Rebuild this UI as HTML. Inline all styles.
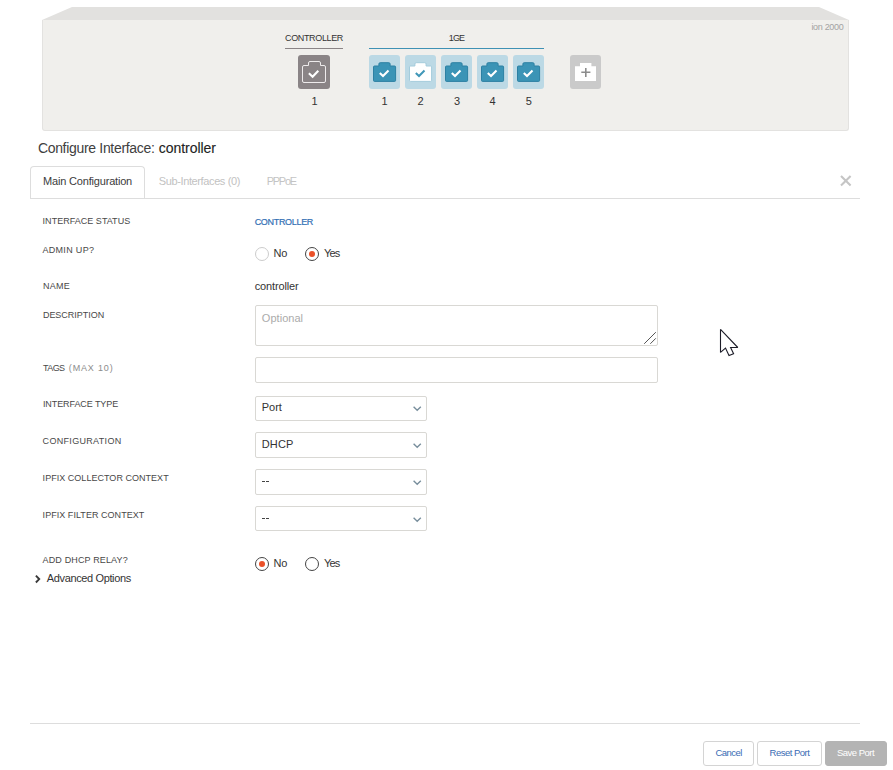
<!DOCTYPE html>
<html>
<head>
<meta charset="utf-8">
<title>Configure Interface: controller</title>
<style>
*{box-sizing:border-box;margin:0;padding:0}
html,body{width:893px;height:770px;background:#fff;overflow:hidden}
body{font-family:"Liberation Sans",sans-serif;color:#333;position:relative}
.abs{position:absolute}
.t{position:absolute;white-space:nowrap;line-height:1}
#body{left:42px;top:20px;width:807px;height:111px;background:#f0efec;border:1px solid #e3e2e0;border-top:none;border-radius:0 0 3px 3px}
.port{position:absolute;top:55px;width:31px;height:34px;border-radius:3px}
.p-blue{background:#bcd9e5}
.box{position:absolute;border:1px solid #d9d8d4;border-radius:2px;background:#fff}
.btn{position:absolute;top:741px;height:25px;border:1px solid #d4d4d4;border-radius:3px;background:#fff}
.radio{position:absolute;width:14px;height:14px;border-radius:50%;border:1px solid #444;background:#fff}
.radio.off{border-color:#ccc}
.radio i{position:absolute;left:3px;top:3px;width:6px;height:6px;border-radius:50%;background:#ea5028}
svg{position:absolute;overflow:visible}
</style>
</head>
<body>

<svg style="left:42px;top:7px" width="807" height="13" viewBox="0 0 807 13"><polygon points="30,0 777,0 807,13 0,13" fill="#e2e1df"/></svg>
<div class="abs" id="body"></div>
<div class="t" style="left:811.40px;top:23px;font-size:9px;letter-spacing:-0.313px;color:#a3a3a3;">ion 2000</div>
<div class="t" style="left:285.00px;top:34px;font-size:9px;letter-spacing:-0.350px;color:#333;">CONTROLLER</div>
<div class="abs" style="left:285px;top:48px;width:58px;height:1px;background:#8a8486"></div>
<div class="t" style="left:448.70px;top:34px;font-size:9px;letter-spacing:-0.800px;color:#333;">1GE</div>
<div class="abs" style="left:369px;top:48px;width:175px;height:1px;background:#3f91b4"></div>
<div class="port" style="left:298px;width:32px;background:#8a8486"></div>
<svg style="left:298px;top:55px" width="32" height="34" viewBox="0 0 32 34"><path d="M6 10.5 H10.5 V8 Q10.5 6.5 12 6.5 H21 Q22.5 6.5 22.5 8 V10.5 H26 Q27.5 10.5 27.5 12 V26 Q27.5 27.5 26 27.5 H6 Q4.5 27.5 4.5 26 V12 Q4.5 10.5 6 10.5 Z" fill="none" stroke="#eeebec" stroke-width="1"/><path d="M10.9 18.3 L14.6 21.8 L20.3 15.7" fill="none" stroke="#fff" stroke-width="2.1" stroke-linecap="butt" stroke-linejoin="miter"/></svg>
<div class="port p-blue" style="left:369px"></div>
<svg style="left:369px;top:55px" width="31" height="34" viewBox="0 0 31 34"><path d="M5.5 11 H9.9 V9 Q9.9 7.7 11.2 7.7 H19.8 Q21.1 7.7 21.1 9 V11 H25.6 Q26.6 11 26.6 12 V25.4 Q26.6 26.4 25.6 26.4 H5.5 Q4.5 26.4 4.5 25.4 V12 Q4.5 11 5.5 11 Z" fill="#3b94b6" stroke="#2d80a3" stroke-width="1"/><path d="M10.8 18.0 L14 21.0 L19.5 15.5" fill="none" stroke="#fff" stroke-width="2.1" stroke-linecap="butt" stroke-linejoin="miter"/></svg>
<div class="port p-blue" style="left:405px"></div>
<svg style="left:405px;top:55px" width="31" height="34" viewBox="0 0 31 34"><path d="M5.5 11 H9.9 V9 Q9.9 7.7 11.2 7.7 H19.8 Q21.1 7.7 21.1 9 V11 H25.6 Q26.6 11 26.6 12 V25.4 Q26.6 26.4 25.6 26.4 H5.5 Q4.5 26.4 4.5 25.4 V12 Q4.5 11 5.5 11 Z" fill="#fff" stroke="#a4ccdc" stroke-width="1"/><path d="M10.8 18.0 L14 21.0 L19.5 15.5" fill="none" stroke="#4097b8" stroke-width="2" stroke-linecap="butt" stroke-linejoin="miter"/></svg>
<div class="port p-blue" style="left:441px"></div>
<svg style="left:441px;top:55px" width="31" height="34" viewBox="0 0 31 34"><path d="M5.5 11 H9.9 V9 Q9.9 7.7 11.2 7.7 H19.8 Q21.1 7.7 21.1 9 V11 H25.6 Q26.6 11 26.6 12 V25.4 Q26.6 26.4 25.6 26.4 H5.5 Q4.5 26.4 4.5 25.4 V12 Q4.5 11 5.5 11 Z" fill="#3b94b6" stroke="#2d80a3" stroke-width="1"/><path d="M10.8 18.0 L14 21.0 L19.5 15.5" fill="none" stroke="#fff" stroke-width="2.1" stroke-linecap="butt" stroke-linejoin="miter"/></svg>
<div class="port p-blue" style="left:477px"></div>
<svg style="left:477px;top:55px" width="31" height="34" viewBox="0 0 31 34"><path d="M5.5 11 H9.9 V9 Q9.9 7.7 11.2 7.7 H19.8 Q21.1 7.7 21.1 9 V11 H25.6 Q26.6 11 26.6 12 V25.4 Q26.6 26.4 25.6 26.4 H5.5 Q4.5 26.4 4.5 25.4 V12 Q4.5 11 5.5 11 Z" fill="#3b94b6" stroke="#2d80a3" stroke-width="1"/><path d="M10.8 18.0 L14 21.0 L19.5 15.5" fill="none" stroke="#fff" stroke-width="2.1" stroke-linecap="butt" stroke-linejoin="miter"/></svg>
<div class="port p-blue" style="left:513px"></div>
<svg style="left:513px;top:55px" width="31" height="34" viewBox="0 0 31 34"><path d="M5.5 11 H9.9 V9 Q9.9 7.7 11.2 7.7 H19.8 Q21.1 7.7 21.1 9 V11 H25.6 Q26.6 11 26.6 12 V25.4 Q26.6 26.4 25.6 26.4 H5.5 Q4.5 26.4 4.5 25.4 V12 Q4.5 11 5.5 11 Z" fill="#3b94b6" stroke="#2d80a3" stroke-width="1"/><path d="M10.8 18.0 L14 21.0 L19.5 15.5" fill="none" stroke="#fff" stroke-width="2.1" stroke-linecap="butt" stroke-linejoin="miter"/></svg>
<div class="port" style="left:570px;background:#cacaca"></div>
<svg style="left:570px;top:55px" width="31" height="34" viewBox="0 0 31 34"><path d="M5 11.3 H10 V8 H21.4 V11.3 H26 V26 H5 Z" fill="#fff"/><path d="M11.3 17.3 H20.4 M15.8 13 V22" stroke="#8c8c8c" stroke-width="1.6" fill="none"/></svg>
<div class="t" style="left:311.41px;top:96px;font-size:11px;letter-spacing:0.000px;color:#333;">1</div>
<div class="t" style="left:381.61px;top:96px;font-size:11px;letter-spacing:0.000px;color:#333;">1</div>
<div class="t" style="left:417.41px;top:96px;font-size:11px;letter-spacing:0.000px;color:#333;">2</div>
<div class="t" style="left:454.01px;top:96px;font-size:11px;letter-spacing:0.000px;color:#333;">3</div>
<div class="t" style="left:489.61px;top:96px;font-size:11px;letter-spacing:0.000px;color:#333;">4</div>
<div class="t" style="left:525.71px;top:96px;font-size:11px;letter-spacing:0.000px;color:#333;">5</div>
<div class="t" style="left:37.90px;top:141px;font-size:14px;letter-spacing:-0.318px;color:#404040;">Configure Interface:</div>
<div class="t" style="left:158.80px;top:141px;font-size:14px;letter-spacing:-0.048px;color:#222;-webkit-text-stroke:0.12px #222;">controller</div>
<div class="abs" style="left:30px;top:166px;width:115px;height:33px;border:1px solid #ddd;border-bottom:none;border-radius:4px 4px 0 0;background:#fff"></div>
<div class="abs" style="left:30px;top:198px;width:830px;height:1px;background:#ddd"></div>
<div class="t" style="left:43.10px;top:176px;font-size:11px;letter-spacing:-0.188px;color:#3c3c3c;">Main Configuration</div>
<div class="t" style="left:158.80px;top:176px;font-size:11px;letter-spacing:-0.382px;color:#c2c2c2;">Sub-Interfaces (0)</div>
<div class="t" style="left:266.80px;top:176px;font-size:11px;letter-spacing:-1.302px;color:#c4c4c4;">PPPoE</div>
<svg style="left:840px;top:175px" width="12" height="12" viewBox="0 0 12 12"><path d="M1 1 L10.6 10.6 M10.6 1 L1 10.6" stroke="#c5c5c5" stroke-width="2.1" fill="none"/></svg>
<div class="t" style="left:42.60px;top:217px;font-size:9px;letter-spacing:0.027px;color:#484848;">INTERFACE STATUS</div>
<div class="t" style="left:42.40px;top:246px;font-size:9px;letter-spacing:0.328px;color:#484848;">ADMIN UP?</div>
<div class="t" style="left:42.90px;top:282px;font-size:9px;letter-spacing:0.328px;color:#484848;">NAME</div>
<div class="t" style="left:42.90px;top:311px;font-size:9px;letter-spacing:-0.015px;color:#484848;">DESCRIPTION</div>
<div class="t" style="left:42.90px;top:400px;font-size:9px;letter-spacing:-0.081px;color:#484848;">INTERFACE TYPE</div>
<div class="t" style="left:42.60px;top:437px;font-size:9px;letter-spacing:0.316px;color:#484848;">CONFIGURATION</div>
<div class="t" style="left:42.60px;top:474px;font-size:9px;letter-spacing:0.032px;color:#484848;">IPFIX COLLECTOR CONTEXT</div>
<div class="t" style="left:42.60px;top:511px;font-size:9px;letter-spacing:0.046px;color:#484848;">IPFIX FILTER CONTEXT</div>
<div class="t" style="left:42.60px;top:556px;font-size:9px;letter-spacing:0.139px;color:#484848;">ADD DHCP RELAY?</div>
<div class="t" style="left:42.90px;top:364px;font-size:9px;letter-spacing:-0.535px;color:#484848;">TAGS</div>
<div class="t" style="left:68.80px;top:364px;font-size:9px;letter-spacing:0.833px;color:#8c8c8c;">(MAX 10)</div>
<div class="t" style="left:254.70px;top:218px;font-size:9px;letter-spacing:-0.317px;color:#3370b5;-webkit-text-stroke:0.2px #3370b5;">CONTROLLER</div>
<div class="radio off" style="left:255px;top:247px"></div>
<div class="radio" style="left:305px;top:247px"><i></i></div>
<div class="t" style="left:273.60px;top:248px;font-size:11px;letter-spacing:-0.394px;color:#333;">No</div>
<div class="t" style="left:324.00px;top:248px;font-size:11px;letter-spacing:-0.887px;color:#333;">Yes</div>
<div class="t" style="left:254.70px;top:281px;font-size:11px;letter-spacing:-0.134px;color:#333;">controller</div>
<div class="box" style="left:255px;top:305px;width:403px;height:41px"></div>
<div class="t" style="left:261.80px;top:313px;font-size:11px;letter-spacing:0.042px;color:#ababab;">Optional</div>
<svg style="left:643px;top:331px" width="14" height="14" viewBox="0 0 14 14"><path d="M1.2 12.8 L12.8 1.2 M7.3 12.8 L12.8 7.3" stroke="#555" stroke-width="1" fill="none"/></svg>
<div class="box" style="left:255px;top:357px;width:403px;height:26px"></div>
<div class="box" style="left:255px;top:396px;width:172px;height:25px"></div>
<svg style="left:413px;top:406.4px" width="9" height="6" viewBox="0 0 9 6"><path d="M0.6 0.8 L4.2 4.2 L7.8 0.8" stroke="#788e9c" stroke-width="1.4" fill="none"/></svg>
<div class="t" style="left:261.80px;top:402px;font-size:11px;letter-spacing:-0.027px;color:#333;">Port</div>
<div class="box" style="left:255px;top:432px;width:172px;height:26px"></div>
<svg style="left:413px;top:443.0px" width="9" height="6" viewBox="0 0 9 6"><path d="M0.6 0.8 L4.2 4.2 L7.8 0.8" stroke="#788e9c" stroke-width="1.4" fill="none"/></svg>
<div class="t" style="left:261.80px;top:439px;font-size:11px;letter-spacing:0.097px;color:#333;">DHCP</div>
<div class="box" style="left:255px;top:469px;width:172px;height:26px"></div>
<svg style="left:413px;top:480.4px" width="9" height="6" viewBox="0 0 9 6"><path d="M0.6 0.8 L4.2 4.2 L7.8 0.8" stroke="#788e9c" stroke-width="1.4" fill="none"/></svg>
<div class="box" style="left:255px;top:506px;width:172px;height:25px"></div>
<svg style="left:413px;top:517.0px" width="9" height="6" viewBox="0 0 9 6"><path d="M0.6 0.8 L4.2 4.2 L7.8 0.8" stroke="#788e9c" stroke-width="1.4" fill="none"/></svg>
<div class="abs" style="left:262px;top:481px;width:3px;height:1px;background:#444"></div><div class="abs" style="left:266px;top:481px;width:3px;height:1px;background:#444"></div>
<div class="abs" style="left:262px;top:518px;width:3px;height:1px;background:#444"></div><div class="abs" style="left:266px;top:518px;width:3px;height:1px;background:#444"></div>
<div class="radio" style="left:255px;top:557px"><i></i></div>
<div class="radio" style="left:305px;top:557px"></div>
<div class="t" style="left:273.60px;top:558px;font-size:11px;letter-spacing:-0.394px;color:#333;">No</div>
<div class="t" style="left:324.00px;top:558px;font-size:11px;letter-spacing:-0.887px;color:#333;">Yes</div>
<svg style="left:35px;top:575px" width="6" height="8" viewBox="0 0 6 8"><path d="M0.9 0.7 L4.2 4.1 L0.9 7.5" stroke="#3a3a3a" stroke-width="1.9" fill="none"/></svg>
<div class="t" style="left:46.80px;top:573px;font-size:11px;letter-spacing:-0.366px;color:#333;">Advanced Options</div>
<svg style="left:715px;top:325px" width="30" height="36" viewBox="715 325 30 36"><path d="M720.5 329.4 L720.5 352.4 L725.5 348.1 L729 355.6 L733.6 353.7 L730.6 347.5 L737.8 347.5 Z" fill="#fff" stroke="#1c1c28" stroke-width="1.1" stroke-linejoin="miter" stroke-miterlimit="2"/></svg>
<div class="abs" style="left:30px;top:723px;width:830px;height:1px;background:#ddd"></div>
<div class="btn" style="left:703px;width:51px"></div>
<div class="btn" style="left:757px;width:65px"></div>
<div class="btn" style="left:825px;width:62px;background:#b4b4b4;border-color:#b4b4b4"></div>
<div class="t" style="left:715.50px;top:748px;font-size:9.5px;letter-spacing:-0.548px;color:#3a6cb4;">Cancel</div>
<div class="t" style="left:769.60px;top:748px;font-size:9.5px;letter-spacing:-0.509px;color:#3a6cb4;">Reset Port</div>
<div class="t" style="left:836.90px;top:748px;font-size:9.5px;letter-spacing:-0.501px;color:#fff;">Save Port</div>
</body>
</html>
